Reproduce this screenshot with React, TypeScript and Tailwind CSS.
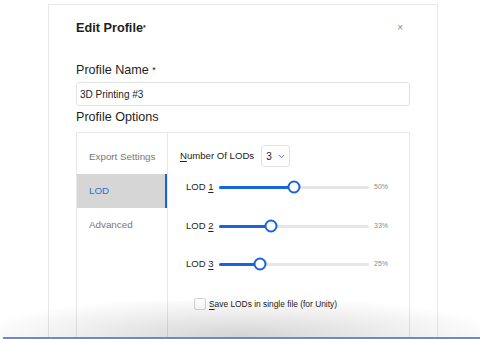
import { ChevronDown } from 'lucide-react'

const lods = [
  { n: '1', value: 0.5, label: '50%' },
  { n: '2', value: 0.33, label: '33%' },
  { n: '3', value: 0.25, label: '25%' }
]

const LodSlider = ({ n, value, label }: { n: string; value: number; label: string }) => {
  // thumb centre sits 6px in from each end of the 150px track
  const centre = 6 + value * 138
  return (
    <div className="flex items-center h-[14px] pl-[6px]">
      <span className="w-[33px] text-[9.5px] text-[#222]">
        LOD <span className="underline underline-offset-2">{n}</span>
      </span>
      <div className="relative w-[150px] h-[3px] bg-[#e6e6e6] rounded-full">
        <div className="absolute left-0 top-0 h-[3px] bg-[#1a64db] rounded-full" style={{ width: centre }} />
        <div
          className="absolute top-1/2 w-[13px] h-[13px] -translate-x-1/2 -translate-y-1/2 rounded-full border-2 border-[#1a64db] bg-white"
          style={{ left: centre }}
        />
      </div>
      <span className="ml-[5px] text-[7px] text-[#8a8a8a]">{label}</span>
    </div>
  )
}

export default function App() {
  return (
    <div className="relative w-[480px] h-[339px] overflow-hidden bg-white font-['Liberation_Sans',Arial,sans-serif]">
      <div className="flex flex-col ml-[48px] mt-[4px] w-[390px] h-[335px] border border-b-0 border-[#e8e8e8] pl-[27px] pr-[27px]">
        <div className="flex items-center justify-between pt-[15px] h-[31px]">
          <h1 className="text-[12.7px] leading-[16px] font-bold text-[#1e1e1e]">
            Edit Profile<span className="align-top text-[7px] font-bold">*</span>
          </h1>
          <span className="mr-[7px] text-[10px] leading-none text-[#888]">×</span>
        </div>

        <label className="mt-[26px] text-[12.6px] leading-[16px] text-[#1e1e1e]">
          Profile Name <span className="text-[9px] align-top">*</span>
        </label>
        <div className="mt-[4px] flex items-center h-[24px] border border-[#e2e2e2] rounded-[3px] pl-[3px] text-[10px] text-[#222]">
          3D Printing #3
        </div>

        <div className="mt-[3px] text-[12.6px] leading-[16px] text-[#1e1e1e]">Profile Options</div>

        <div className="mt-[7px] flex flex-1 border border-b-0 border-[#e8e8e8]">
          <div className="w-[91px] pt-[7px] border-r border-[#e8e8e8] text-[9.8px]">
            <div className="flex items-center h-[34px] pl-[12px] text-[#777]">Export Settings</div>
            <div className="flex items-center h-[34px] pl-[12px] bg-[#d6d6d6] text-[#2d6ed8] shadow-[inset_-2px_0_0_#1a64db]">
              LOD
            </div>
            <div className="flex items-center h-[34px] pl-[12px] text-[#777]">Advanced</div>
          </div>

          <div className="flex flex-col pl-[12px] pt-[12px]">
            <div className="flex items-center gap-[7px] h-[22px]">
              <span className="text-[9.6px] text-[#222]">
                <span className="underline underline-offset-2">N</span>umber Of LODs
              </span>
              <div className="flex items-center gap-[5px] h-[22px] w-[29px] pl-[4px] border border-[#e2e2e2] rounded-[3px] text-[10px] text-[#222]">
                3
                <ChevronDown size={9} strokeWidth={2.5} className="text-[#2d6ed8]" />
              </div>
            </div>

            <div className="mt-[13px]">
              <LodSlider {...lods[0]} />
            </div>
            <div className="mt-[25px]">
              <LodSlider {...lods[1]} />
            </div>
            <div className="mt-[24px]">
              <LodSlider {...lods[2]} />
            </div>

            <label className="mt-[27px] ml-[14px] flex items-center gap-[3px] text-[8.4px] text-[#222]">
              <span className="w-[12px] h-[12px] border border-[#d4d4d4] rounded-[2px] bg-white" />
              <span>
                <span className="underline underline-offset-2">S</span>ave LODs in single file (for Unity)
              </span>
            </label>
          </div>
        </div>
      </div>

      <div className="pointer-events-none absolute left-0 right-0 bottom-[2px] h-[36px] bg-[radial-gradient(ellipse_at_bottom,rgba(0,0,0,0.17),rgba(0,0,0,0.05)_55%,transparent_80%)]" />
      <div className="absolute left-[3px] right-0 bottom-0 h-[2px] bg-[#5a8ee6]" />
    </div>
  )
}
